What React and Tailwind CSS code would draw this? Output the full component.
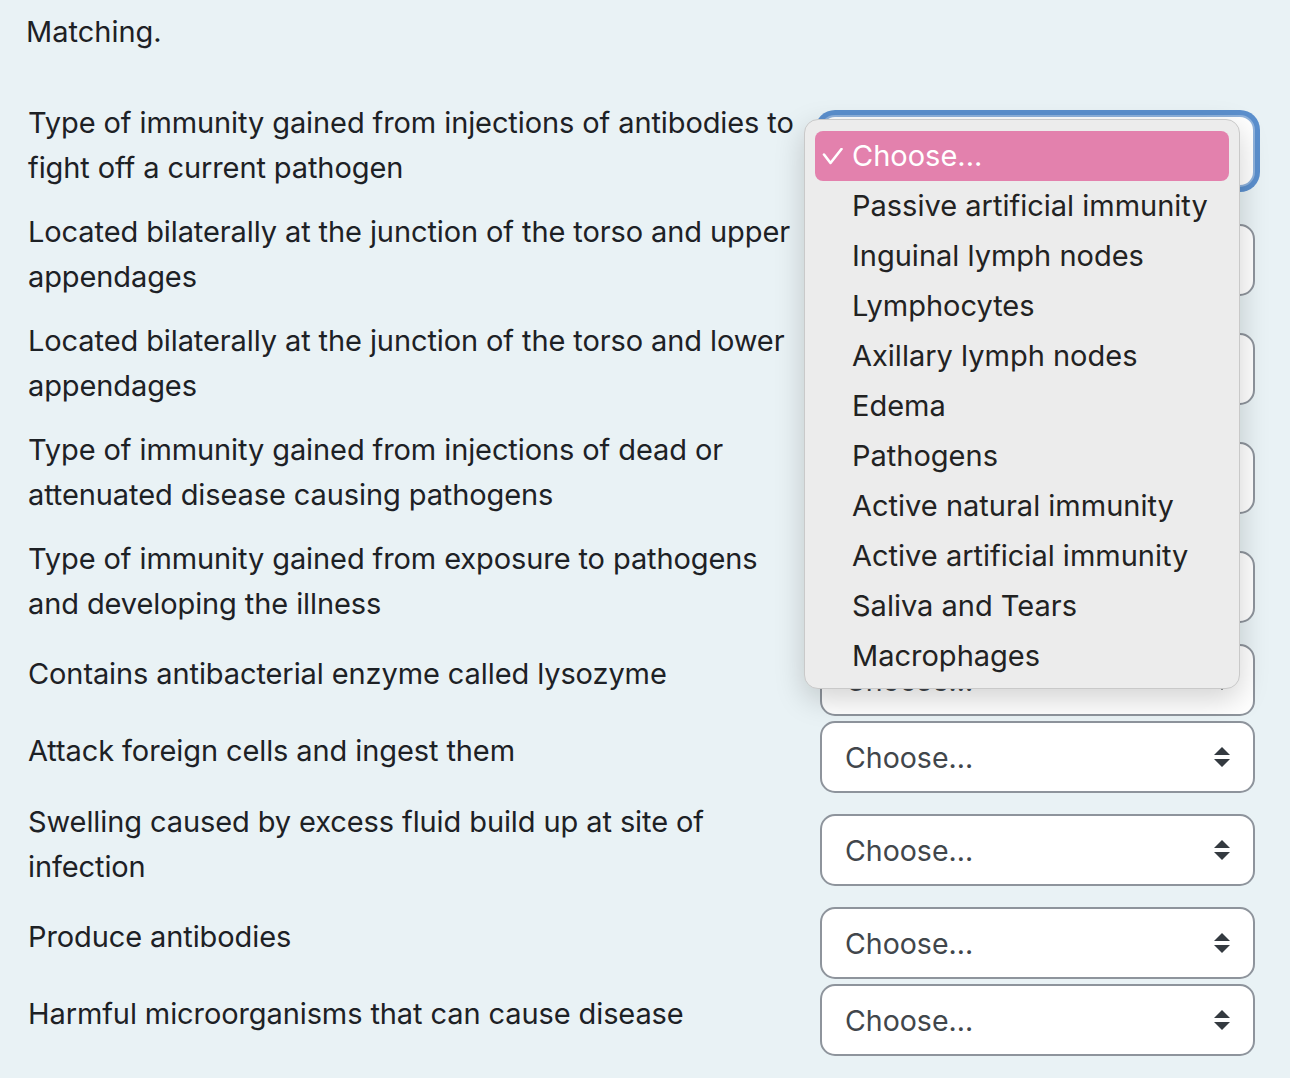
import React from "react";

const rows = [
  { lines: ["Type of immunity gained from injections of antibodies to", "fight off a current pathogen"], focus: true },
  { lines: ["Located bilaterally at the junction of the torso and upper", "appendages"] },
  { lines: ["Located bilaterally at the junction of the torso and lower", "appendages"] },
  { lines: ["Type of immunity gained from injections of dead or", "attenuated disease causing pathogens"] },
  { lines: ["Type of immunity gained from exposure to pathogens", "and developing the illness"] },
  { lines: ["Contains antibacterial enzyme called lysozyme"] },
  { lines: ["Attack foreign cells and ingest them"] },
  { lines: ["Swelling caused by excess fluid build up at site of", "infection"] },
  { lines: ["Produce antibodies"] },
  { lines: ["Harmful microorganisms that can cause disease"] },
];

const options = [
  "Passive artificial immunity",
  "Inguinal lymph nodes",
  "Lymphocytes",
  "Axillary lymph nodes",
  "Edema",
  "Pathogens",
  "Active natural immunity",
  "Active artificial immunity",
  "Saliva and Tears",
  "Macrophages",
];

function Arrows() {
  return (
    <svg width="16" height="20" viewBox="0 0 4 5" className="shrink-0">
      <path d="M2 0L0 2h4zm0 5L0 3h4z" fill="#343a40" />
    </svg>
  );
}

function Select({ focus }) {
  return (
    <div
      className={
        "mt-[12px] h-[72px] w-[435px] shrink-0 rounded-[15px] border-2 bg-white flex items-center justify-between pl-[23px] pr-[23px] " +
        (focus ? "border-[#8fb2dc] ring-[5px] ring-[#5b8fcd]" : "border-[#8e949c]")
      }
    >
      <span className="text-[28.5px] text-[#41464b] pt-[3px]">Choose...</span>
      <Arrows />
    </div>
  );
}

export default function App() {
  return (
    <div
      className="relative min-h-screen bg-[#e9f2f5] text-[#1d2125]"
      style={{ fontFamily: "Inter, 'Noto Sans', sans-serif" }}
    >
      <div className="pl-[28px] pr-[35px] pt-[9px]">
        <p className="text-[29px] leading-[45px] -ml-[2px]">Matching.</p>
        <div className="mt-[36px] flex flex-col">
          {rows.map((r, i) => (
            <div
              key={i}
              className={"flex items-center " + (r.lines.length > 1 ? "h-[109px]" : "h-[77px]")}
            >
              <div className="flex-1 text-[29px] leading-[45px] tracking-[-0.1px]">
                {r.lines.map((l, j) => (
                  <div key={j} className="whitespace-nowrap">{l}</div>
                ))}
              </div>
              <Select focus={r.focus} />
            </div>
          ))}
        </div>
      </div>

      <div className="absolute left-[804px] top-[119px] w-[436px] h-[570px] rounded-[14px] border border-[#c9c9c9] bg-[#ececec] shadow-[0_10px_30px_rgba(0,0,0,0.18)] px-[10px] pt-[11px]">
        <div className="h-[50px] rounded-[8px] bg-[#e381ad] flex items-center relative">
          <svg
            width="22"
            height="18"
            viewBox="0 0 22 18"
            className="absolute left-[7px] top-[17px]"
          >
            <path d="M2 6.5 L8.5 15 L19.5 1" fill="none" stroke="#ffffff" strokeWidth="2.6" strokeLinecap="round" strokeLinejoin="round" />
          </svg>
          <span className="pl-[37px] text-[29px] text-white">Choose...</span>
        </div>
        {options.map((o) => (
          <div key={o} className="h-[50px] flex items-center pl-[37px] text-[29px] text-[#222222]">
            {o}
          </div>
        ))}
      </div>
    </div>
  );
}
